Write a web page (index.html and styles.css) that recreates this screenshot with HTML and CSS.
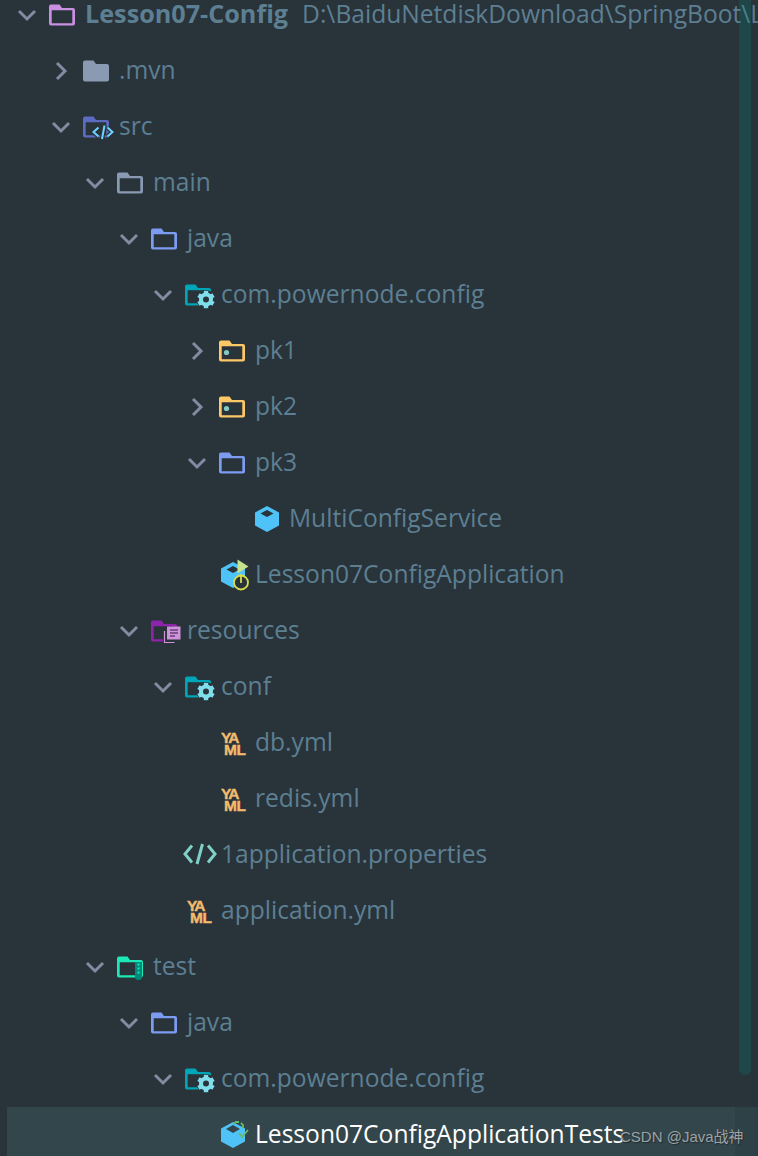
FILE: index.html
```html
<!DOCTYPE html>
<html lang="en">
<head>
<meta charset="utf-8">
<title>Project tree</title>
<link rel="stylesheet" href="styles.css">
</head>
<body>
<svg class="defs" width="0" height="0" aria-hidden="true">
  <defs>
    <symbol id="chev-down" viewBox="0 0 24 24"><path d="M4 8l8 8 8-8" fill="none" stroke="currentColor" stroke-width="3"/></symbol>
    <symbol id="chev-right" viewBox="0 0 24 24"><path d="M8 4l8 8-8 8" fill="none" stroke="currentColor" stroke-width="3"/></symbol>
    <path id="folder-line" fill-rule="evenodd" d="M2 3.500h8.500l2.500 3.500h11a2 2 0 0 1 2 2v13.500a2 2 0 0 1-2 2H2a2 2 0 0 1-2-2V5.500a2 2 0 0 1 2-2zM2.700 9.200v13h20.600v-13z"/>
    <path id="cube-body" d="M14 1l12 6.500v13L14 27 2 20.500v-13z"/>
    <g id="gear-folder">
      <use href="#folder-line" class="c-teal"/>
      <circle cx="21" cy="18.500" r="9.500" class="c-bg"/>
      <g class="c-gear">
        <circle cx="21" cy="18.500" r="7"/>
        <path d="M18.800 9.800h4.400v17.400h-4.400z"/>
        <path d="M18.800 9.800h4.400v17.400h-4.400z" transform="rotate(60 21 18.500)"/>
        <path d="M18.800 9.800h4.400v17.400h-4.400z" transform="rotate(120 21 18.500)"/>
      </g>
      <circle cx="21" cy="18.500" r="3" class="c-bg"/>
    </g>
    <g id="yaml-mark">
      <text class="yaml" x="2" y="14" textLength="18.500" lengthAdjust="spacing">YA</text>
      <text class="yaml" x="5" y="26" textLength="22" lengthAdjust="spacing">ML</text>
    </g>
  </defs>
</svg>

<main class="tree">
  <div class="row lv0">
    <svg class="chev"><use href="#chev-down"/></svg>
    <svg class="icon" viewBox="0 0 26 26"><use href="#folder-line" class="c-module"/></svg>
    <span class="name bold">Lesson07-Config</span><span class="name path">D:\BaiduNetdiskDownload\SpringBoot\Lesson07-Config</span>
  </div>
  <div class="row lv1">
    <svg class="chev"><use href="#chev-right"/></svg>
    <svg class="icon" viewBox="0 0 26 26"><path class="c-gray" d="M2 3.500h8.500l2.500 3.500h11a2 2 0 0 1 2 2v13.500a2 2 0 0 1-2 2H2a2 2 0 0 1-2-2V5.500a2 2 0 0 1 2-2z"/></svg>
    <span class="name">.mvn</span>
  </div>
  <div class="row lv1">
    <svg class="chev"><use href="#chev-down"/></svg>
    <svg class="icon" viewBox="0 0 26 26">
      <use href="#folder-line" class="c-src"/>
      <path d="M15.500 14.500l-5 4.500 5 4.500M24.500 14.500l5 4.500-5 4.500M21.500 12.500l-2.500 13.500" fill="none" class="halo"/>
      <path d="M15.500 14.500l-5 4.500 5 4.500M24.500 14.500l5 4.500-5 4.500M21.500 12.500l-2.500 13.500" fill="none" stroke="#6fd3ff" stroke-width="2"/>
    </svg>
    <span class="name">src</span>
  </div>
  <div class="row lv2">
    <svg class="chev"><use href="#chev-down"/></svg>
    <svg class="icon" viewBox="0 0 26 26"><use href="#folder-line" class="c-gray"/></svg>
    <span class="name">main</span>
  </div>
  <div class="row lv3">
    <svg class="chev"><use href="#chev-down"/></svg>
    <svg class="icon" viewBox="0 0 26 26"><use href="#folder-line" class="c-blue"/></svg>
    <span class="name">java</span>
  </div>
  <div class="row lv4">
    <svg class="chev"><use href="#chev-down"/></svg>
    <svg class="icon" viewBox="0 0 26 26"><use href="#gear-folder"/></svg>
    <span class="name">com.powernode.config</span>
  </div>
  <div class="row lv5">
    <svg class="chev"><use href="#chev-right"/></svg>
    <svg class="icon" viewBox="0 0 26 26"><use href="#folder-line" class="c-yellow"/><circle cx="7.500" cy="15.500" r="2.600" class="c-dot"/></svg>
    <span class="name">pk1</span>
  </div>
  <div class="row lv5">
    <svg class="chev"><use href="#chev-right"/></svg>
    <svg class="icon" viewBox="0 0 26 26"><use href="#folder-line" class="c-yellow"/><circle cx="7.500" cy="15.500" r="2.600" class="c-dot"/></svg>
    <span class="name">pk2</span>
  </div>
  <div class="row lv5">
    <svg class="chev"><use href="#chev-down"/></svg>
    <svg class="icon" viewBox="0 0 26 26"><use href="#folder-line" class="c-blue"/></svg>
    <span class="name">pk3</span>
  </div>
  <div class="row lv6">
    <span class="chev"></span>
    <svg class="icon" viewBox="0 0 26 26"><use href="#cube-body" class="c-cube"/><path d="M14 5l6.500 3.500L14 12 7.500 8.500z" class="c-bg"/></svg>
    <span class="name">MultiConfigService</span>
  </div>
  <div class="row lv5">
    <span class="chev"></span>
    <svg class="icon" viewBox="0 0 26 26">
      <use href="#cube-body" class="c-cube"/>
      <path d="M14 5l6.500 3.500L14 12 7.500 8.500z" class="c-bg"/>
      <path d="M18.500-1.500l11 7-11 7z" fill="#c5e38f"/>
      <circle cx="22" cy="21.500" r="7" stroke="#d7dc4c" stroke-width="1.800" class="c-bg"/>
      <path d="M22 13v9" stroke="#d7dc4c" stroke-width="1.800"/>
    </svg>
    <span class="name">Lesson07ConfigApplication</span>
  </div>
  <div class="row lv3">
    <svg class="chev"><use href="#chev-down"/></svg>
    <svg class="icon" viewBox="0 0 26 26">
      <use href="#folder-line" class="c-purple"/>
      <path d="M12 12h18v14H12z" class="c-bg"/>
      <path d="M13.500 14v11.500h10" fill="none" stroke="#ce93d8" stroke-width="1.200"/>
      <path d="M16 9.500h13.500v13H16z" fill="#ce93d8"/>
      <path d="M19 13h8M19 16h8M19 19h5" stroke="#6a3d78" stroke-width="1.500"/>
    </svg>
    <span class="name">resources</span>
  </div>
  <div class="row lv4">
    <svg class="chev"><use href="#chev-down"/></svg>
    <svg class="icon" viewBox="0 0 26 26"><use href="#gear-folder"/></svg>
    <span class="name">conf</span>
  </div>
  <div class="row lv5">
    <span class="chev"></span>
    <svg class="icon" viewBox="0 0 26 26"><use href="#yaml-mark"/></svg>
    <span class="name">db.yml</span>
  </div>
  <div class="row lv5">
    <span class="chev"></span>
    <svg class="icon" viewBox="0 0 26 26"><use href="#yaml-mark"/></svg>
    <span class="name">redis.yml</span>
  </div>
  <div class="row lv4">
    <span class="chev"></span>
    <svg class="icon" viewBox="0 0 26 26"><path d="M7 4.500L0 13l7 8.500M23 4.500L30 13l-7 8.500M17.500 3L12 23" fill="none" stroke="#7fd1c7" stroke-width="3"/></svg>
    <span class="name">1application.properties</span>
  </div>
  <div class="row lv4">
    <span class="chev"></span>
    <svg class="icon" viewBox="0 0 26 26"><use href="#yaml-mark"/></svg>
    <span class="name">application.yml</span>
  </div>
  <div class="row lv2">
    <svg class="chev"><use href="#chev-down"/></svg>
    <svg class="icon" viewBox="0 0 26 26">
      <use href="#folder-line" class="c-test"/>
      <path d="M18 9h7v14.500a3.500 3.500 0 0 1-7 0z" fill="#00897b"/>
      <path d="M20.500 11.500h2M20.500 15.500h2M20.500 19.500h2" stroke="#1de9b6" stroke-width="1.800"/>
    </svg>
    <span class="name">test</span>
  </div>
  <div class="row lv3">
    <svg class="chev"><use href="#chev-down"/></svg>
    <svg class="icon" viewBox="0 0 26 26"><use href="#folder-line" class="c-blue"/></svg>
    <span class="name">java</span>
  </div>
  <div class="row lv4">
    <svg class="chev"><use href="#chev-down"/></svg>
    <svg class="icon" viewBox="0 0 26 26"><use href="#gear-folder"/></svg>
    <span class="name">com.powernode.config</span>
  </div>
  <div class="row lv5 selected">
    <span class="chev"></span>
    <svg class="icon" viewBox="0 0 26 26">
      <use href="#cube-body" class="c-cube"/>
      <path d="M14 4l7 4-7 4-7-4z" class="c-bg"/>
      <path d="M14 3l3-2h3M22 2l2 2v3M20 12l3 4 6-7" fill="none" stroke="#66bb6a" stroke-width="1.800"/>
    </svg>
    <span class="name">Lesson07ConfigApplicationTests</span>
  </div>
</main>

<div class="scrollbar"></div>
<div class="gutter"></div>
<div class="edge"></div>
<div class="watermark">CSDN @Java战神</div>
</body>
</html>
```

FILE: styles.css
```css
* { box-sizing: border-box; }

html, body {
  margin: 0;
  height: 100%;
  overflow: hidden;
  background: #29333a;
}

body {
  position: relative;
  font-family: "Open Sans", "Noto Sans", sans-serif;
  --row-bg: #29333a;
}

.defs { position: absolute; }

.tree {
  margin-top: -13px;
  display: flex;
  flex-direction: column;
}

.row {
  display: flex;
  align-items: center;
  height: 56px;
  flex: none;
  white-space: nowrap;
  font-size: 24.6px;
  color: #5d7f92;
}

.lv0 { padding-left: 15px; }
.lv1 { padding-left: 49px; }
.lv2 { padding-left: 83px; }
.lv3 { padding-left: 117px; }
.lv4 { padding-left: 151px; }
.lv5 { padding-left: 185px; }
.lv6 { padding-left: 219px; }

.selected {
  margin-left: 7px;
  padding-left: 178px;
  background: #33464b;
  color: #ffffff;
  --row-bg: #33464b;
}

.chev {
  width: 24px;
  height: 24px;
  flex: none;
  margin-right: 10px;
  color: #7f8ca1;
}

.icon {
  width: 26px;
  height: 26px;
  flex: none;
  overflow: visible;
  margin-bottom: 2px;
  margin-right: 10px;
}

.name {
  margin-bottom: 4px;
}

.name.bold {
  font-weight: 700;
  font-size: 25.2px;
}

.name.path {
  margin-left: 14px;
}

.c-bg { fill: var(--row-bg); }
.halo { stroke: var(--row-bg); stroke-width: 4.500; }
.c-module { fill: #c98fe0; }
.c-gray { fill: #8a9ab2; }
.c-src { fill: #5c6bc0; }
.c-blue { fill: #7c9cf2; }
.c-teal { fill: #00a5b8; }
.c-gear { fill: #80deea; }
.c-yellow { fill: #ffc866; }
.c-dot { fill: #80cbc4; }
.c-cube { fill: #4fc3f7; }
.c-purple { fill: #8e24aa; }
.c-test { fill: #1de9b6; }

.yaml {
  font-family: "Liberation Sans", sans-serif;
  font-weight: 700;
  font-size: 15.5px;
  fill: #f3bb6e;
  stroke: #f3bb6e;
  stroke-width: 0.4;
}

.scrollbar {
  position: absolute;
  top: 0;
  left: 739px;
  width: 12px;
  height: 1075px;
  border-radius: 0 0 6px 6px;
  background: rgba(0, 130, 120, 0.244);
}

.gutter {
  position: absolute;
  top: 1107px;
  bottom: 0;
  left: 735px;
  width: 23px;
  background: rgba(30, 50, 60, 0.25);
  pointer-events: none;
}

.edge {
  position: absolute;
  top: 0;
  bottom: 0;
  left: 755px;
  width: 3px;
  background: rgba(30, 60, 80, 0.2);
  pointer-events: none;
}

.watermark {
  position: absolute;
  left: 620px;
  top: 1127px;
  font-family: "Liberation Sans", "Noto Sans CJK SC", sans-serif;
  font-size: 15px;
  line-height: 20px;
  color: #9aa3a6;
  text-shadow: 1px 1px 1px #222a2e;
}
```
